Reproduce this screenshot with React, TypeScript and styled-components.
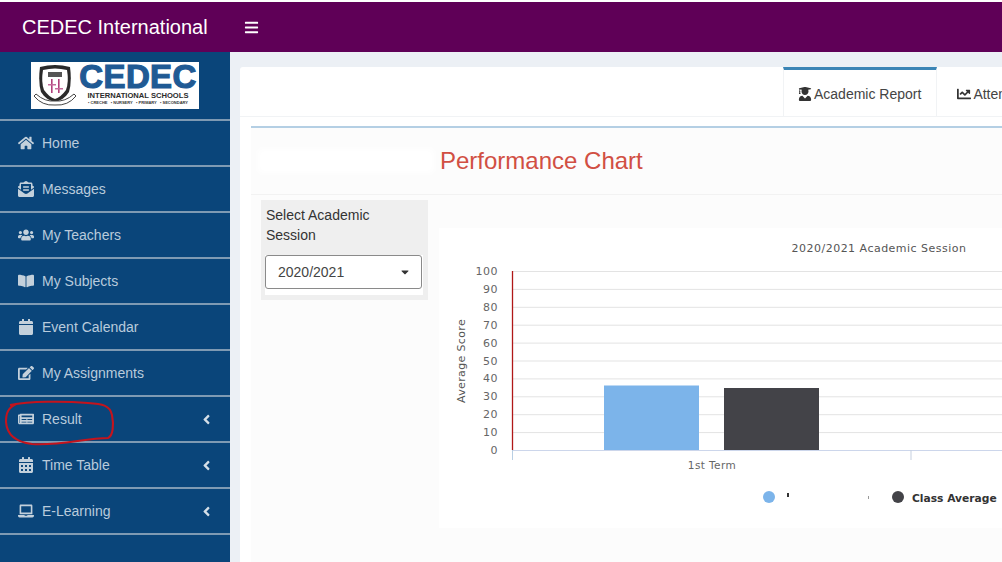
import React from "react";
import styled, { createGlobalStyle } from "styled-components";
import {
  FaHome, FaEnvelopeOpenText, FaUsers, FaBookOpen, FaCalendar, FaEdit, FaNewspaper,
  FaCalendarAlt, FaLaptop, FaAngleLeft, FaBars, FaUserGraduate, FaChartLine, FaCaretDown,
} from "react-icons/fa";

const Global = createGlobalStyle`
  html, body { margin: 0; padding: 0; background: #fff; }
  body { font-family: "Liberation Sans", Arial, sans-serif; }
  * { box-sizing: border-box; }
`;

const Page = styled.div`
  position: relative;
  width: 1002px;
  height: 562px;
  overflow: hidden;
  padding-top: 2px;
  display: flex;
  flex-direction: column;
`;
const Header = styled.header`
  height: 50px;
  flex: none;
  background: #5f0057;
  color: #fff;
  display: flex;
  align-items: center;
`;
const Brand = styled.div`
  width: 230px;
  padding-left: 22px;
  font-size: 20px;
  white-space: nowrap;
`;
const Toggle = styled.div`
  margin-left: 14px;
  display: flex;
  font-size: 15px;
`;
const Body = styled.div`
  flex: 1;
  display: flex;
  min-height: 0;
`;
const Sidebar = styled.nav`
  width: 230px;
  flex: none;
  background: #0a457a;
`;
const LogoSlot = styled.div`
  height: 69px;
  padding-top: 10px;
  border-bottom: 2px solid #7f9ab3;
  display: flex;
  justify-content: center;
  align-items: flex-start;
`;
const Logo = styled.div`
  width: 168px;
  height: 47px;
  background: #fff;
  display: flex;
  padding: 2px 2px 0 1px;
`;
const LogoText = styled.div`
  flex: 1;
  display: flex;
  flex-direction: column;
  align-items: center;
  margin-left: 1px;
`;
const LogoName = styled.div`
  font-size: 33px;
  line-height: 26px;
  height: 26px;
  font-weight: 700;
  color: #1f5a94;
  -webkit-text-stroke: 1.2px #1f5a94;
  letter-spacing: 0.4px;
`;
const LogoSub = styled.div`
  font-size: 7.6px;
  line-height: 9px;
  margin-top: 1px;
  font-weight: 700;
  color: #2b2b2b;
  white-space: nowrap;
`;
const LogoTiny = styled.div`
  font-size: 4px;
  line-height: 6px;
  color: #333;
  font-weight: 700;
  white-space: nowrap;
`;
const Item = styled.div`
  height: 46px;
  padding: 0 17px 0 18px;
  border-bottom: 2px solid #7f9ab3;
  display: flex;
  align-items: center;
  color: #b9cbdc;
  font-size: 14px;
`;
const ItemIcon = styled.span`
  width: 24px;
  flex: none;
  display: flex;
  font-size: 16px;
  color: #c3d0db;
`;
const ItemLabel = styled.span`
  flex: 1;
`;
const Chevron = styled.span`
  display: flex;
  font-size: 15px;
  color: #d5dfe8;
  margin-right: -1px;
`;
const Content = styled.main`
  flex: 1;
  min-width: 0;
  background: #ecf0f5;
  padding: 15px 0 0 10px;
  overflow: hidden;
`;
const Card = styled.section`
  background: #fff;
  height: 100%;
  border-radius: 3px 0 0 0;
`;
const TabBar = styled.div`
  height: 50px;
  border-bottom: 1px solid #f1f3f5;
  padding-left: 543px;
  display: flex;
  white-space: nowrap;
  color: #444;
  font-size: 14px;
`;
const Tab = styled.div<{ $active?: boolean }>`
  flex: none;
  height: 50px;
  margin-right: 5px;
  padding: 0 15px 0 14px;
  display: flex;
  align-items: center;
  gap: 2px;
  border-top: 3px solid ${(p) => (p.$active ? "#3c85b5" : "transparent")};
  border-left: 1px solid ${(p) => (p.$active ? "#f1f3f5" : "transparent")};
  border-right: 1px solid ${(p) => (p.$active ? "#f1f3f5" : "transparent")};
`;
const TabIcon = styled.span`
  display: flex;
  font-size: 14px;
  color: #333;
`;
const Panel = styled.div`
  margin: 9px 0 0 11px;
  height: 100%;
  background: #fcfcfc;
  border-top: 2px solid #b4cfe4;
`;
const TitleRow = styled.div`
  height: 67px;
  border-bottom: 1px solid #f2f2f2;
  padding-left: 7px;
  display: flex;
  align-items: center;
  font-size: 24px;
  color: #d14f43;
`;
const Redacted = styled.span`
  width: 176px;
  height: 24px;
  margin-right: 6px;
  background: #fff;
  filter: blur(3px);
`;
const PanelBody = styled.div`
  display: flex;
  align-items: flex-start;
  padding: 5px 0 0 10px;
`;
const Filter = styled.div`
  width: 167px;
  flex: none;
  background: #efefef;
  padding: 5px 5px 5px 4px;
`;
const FilterLabel = styled.div`
  font-size: 14px;
  line-height: 20px;
  padding: 0 1px 10px 1px;
  color: #333;
`;
const SelectWrap = styled.div`
  background: #fff;
  padding: 0 1px 6px 0;
`;
const Select = styled.div`
  height: 34px;
  border: 1px solid #8a8a8a;
  border-radius: 3px;
  padding: 0 10px 0 12px;
  display: flex;
  align-items: center;
  justify-content: space-between;
  font-size: 14px;
  color: #444;
  background: #fff;
`;
const Caret = styled.span`
  display: flex;
  font-size: 12px;
  color: #333;
`;
const ChartBox = styled.div`
  margin: 28px 0 0 11px;
  flex: none;
  width: 600px;
  height: 300px;
  background: #fff;
`;
const ChartSvg = styled.svg`
  display: block;
  width: 600px;
  height: 300px;
`;
const Scribble = styled.svg`
  position: absolute;
  left: 0;
  top: 395px;
  width: 125px;
  height: 55px;
  pointer-events: none;
`;

const MENU: { label: string; icon: React.ReactNode; sub?: boolean }[] = [
  { label: "Home", icon: <FaHome /> },
  { label: "Messages", icon: <FaEnvelopeOpenText /> },
  { label: "My Teachers", icon: <FaUsers /> },
  { label: "My Subjects", icon: <FaBookOpen /> },
  { label: "Event Calendar", icon: <FaCalendar /> },
  { label: "My Assignments", icon: <FaEdit /> },
  { label: "Result", icon: <FaNewspaper />, sub: true },
  { label: "Time Table", icon: <FaCalendarAlt />, sub: true },
  { label: "E-Learning", icon: <FaLaptop />, sub: true },
];

const TICKS = [100, 90, 80, 70, 60, 50, 40, 30, 20, 10, 0];
const AXIS_FONT = "'DejaVu Sans', sans-serif";

function Chart() {
  // coordinates are page coordinates less the chart box origin (439, 228)
  const yOf = (v: number) => 222 - v * 1.79;
  return (
    <ChartSvg viewBox="0 0 600 300" fontFamily={AXIS_FONT}>
      <text x="440" y="24" fontSize="11" letterSpacing="0.48" fill="#555" textAnchor="middle">
        2020/2021 Academic Session
      </text>
      {TICKS.map((v) => (
        <g key={v}>
          {v > 0 && <line x1="73" x2="600" y1={yOf(v) + 0.5} y2={yOf(v) + 0.5} stroke="#e3e3e3" />}
          <text x="59" y={yOf(v) + 4} fontSize="11" letterSpacing="0.5" fill="#666" textAnchor="end">
            {v}
          </text>
        </g>
      ))}
      <text
        transform="translate(26 133) rotate(-90)"
        fontSize="11"
        letterSpacing="0.35"
        fill="#555"
        textAnchor="middle"
      >
        Average Score
      </text>
      <rect x="165" y="157.5" width="95" height="64.5" fill="#7cb4ea" />
      <rect x="285" y="160" width="95" height="62" fill="#434348" />
      <line x1="73" x2="600" y1="222.5" y2="222.5" stroke="#ccd6eb" />
      <line x1="73.5" x2="73.5" y1="222" y2="232" stroke="#b9cfe4" />
      <line x1="472" x2="472" y1="222" y2="232" stroke="#c5cfdf" />
      <line x1="73.5" x2="73.5" y1="43" y2="222" stroke="#b01818" strokeWidth="1.3" />
      <text x="273" y="241" fontSize="10.5" letterSpacing="0.4" fill="#666" textAnchor="middle">
        1st Term
      </text>
      <circle cx="330" cy="269" r="6" fill="#7cb4ea" />
      <rect x="348" y="265" width="2" height="4" fill="#333" />
      <rect x="429" y="268" width="1" height="3" fill="#999" />
      <circle cx="459" cy="269" r="6" fill="#434348" />
      <text x="473" y="273.5" fontSize="10.7" fontWeight="700" fill="#333">
        Class Average
      </text>
    </ChartSvg>
  );
}

function Shield() {
  return (
    <svg width="46" height="43" viewBox="0 0 46 43" style={{ flex: "none" }}>
      <path d="M8 3 Q23 -1 38 3 Q40 18 37 28 Q32 36 23 38 Q14 36 9 28 Q6 18 8 3Z" fill="#2a2a2a" />
      <path d="M11 6 Q23 3 35 6 Q37 18 34 26 Q29 33 23 35 Q17 33 12 26 Q9 18 11 6Z" fill="#fff" />
      <rect x="16" y="8" width="14" height="5" fill="#555" />
      <path d="M19 15 h1.6 v14 h-1.6z M26 15 h1.6 v14 h-1.6z" fill="#b0407c" />
      <path d="M16 20 h8 v1.5 h-8z M23 24 h8 v1.5 h-8z" fill="#c56a9c" />
      <path d="M2 32 Q10 42 23 41 Q36 42 44 32 L42 30 Q33 38 23 37 Q13 38 4 30Z" fill="#fff" stroke="#444" strokeWidth="1" />
    </svg>
  );
}

export default function App() {
  return (
    <Page>
      <Global />
      <Header>
        <Brand>CEDEC International</Brand>
        <Toggle><FaBars /></Toggle>
      </Header>
      <Body>
        <Sidebar>
          <LogoSlot>
            <Logo>
              <Shield />
              <LogoText>
                <LogoName>CEDEC</LogoName>
                <LogoSub>INTERNATIONAL SCHOOLS</LogoSub>
                <LogoTiny>• CRECHE &nbsp; • NURSERY &nbsp; • PRIMARY &nbsp; • SECONDARY</LogoTiny>
              </LogoText>
            </Logo>
          </LogoSlot>
          {MENU.map((m) => (
            <Item key={m.label}>
              <ItemIcon>{m.icon}</ItemIcon>
              <ItemLabel>{m.label}</ItemLabel>
              {m.sub && <Chevron><FaAngleLeft /></Chevron>}
            </Item>
          ))}
        </Sidebar>
        <Content>
          <Card>
            <TabBar>
              <Tab $active>
                <TabIcon><FaUserGraduate /></TabIcon>
                Academic Report
              </Tab>
              <Tab>
                <TabIcon><FaChartLine /></TabIcon>
                Attendance
              </Tab>
            </TabBar>
            <Panel>
              <TitleRow>
                <Redacted />
                Performance Chart
              </TitleRow>
              <PanelBody>
                <Filter>
                  <FilterLabel>Select Academic Session</FilterLabel>
                  <SelectWrap>
                    <Select>
                      2020/2021
                      <Caret><FaCaretDown /></Caret>
                    </Select>
                  </SelectWrap>
                </Filter>
                <ChartBox><Chart /></ChartBox>
              </PanelBody>
            </Panel>
          </Card>
        </Content>
      </Body>
      <Scribble viewBox="0 0 125 55">
        <path
          d="M10 10 C 30 6 65 6 88 8 C 102 9 110 10 112 20 C 114 30 113 41 108 43 C 85 43 60 51 32 49 C 15 47 7 40 6 27 C 6 18 8 13 16 9"
          fill="none"
          stroke="#c4141d"
          strokeWidth="2.1"
        />
      </Scribble>
    </Page>
  );
}
